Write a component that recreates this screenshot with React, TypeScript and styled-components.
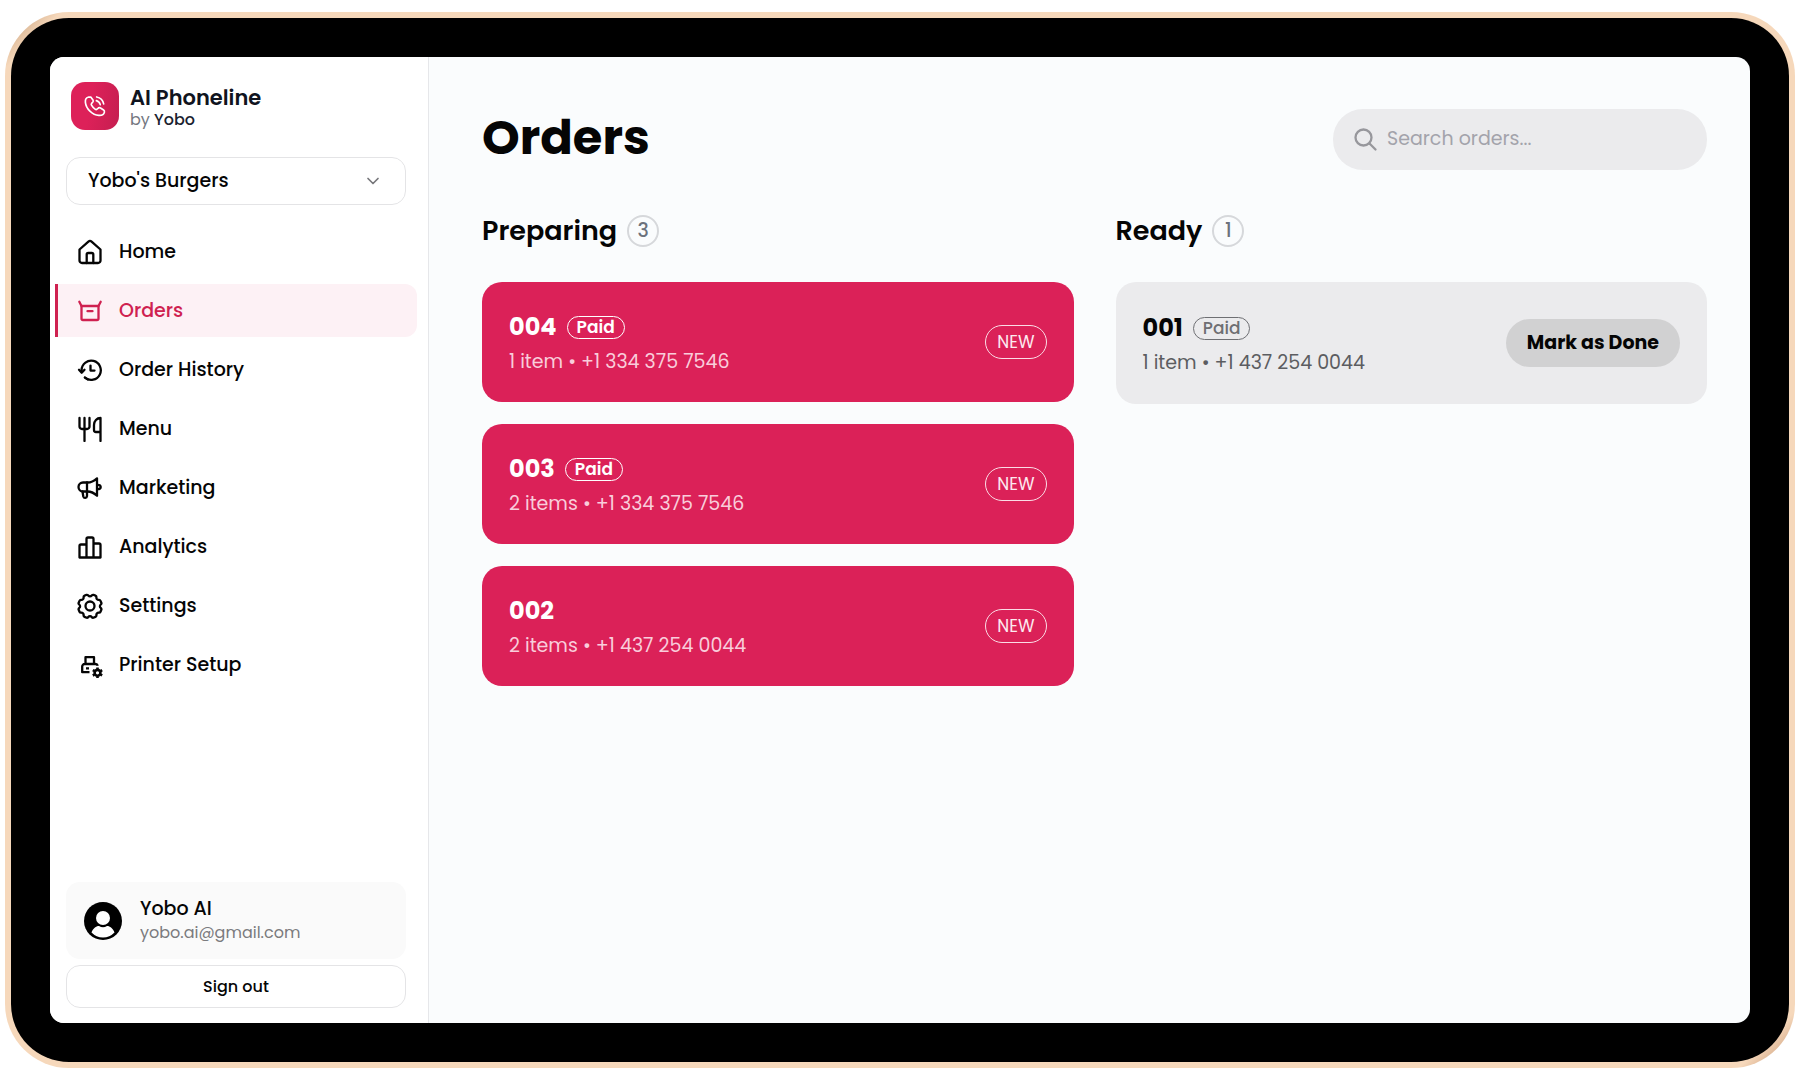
import React from "react";
import styled, { createGlobalStyle, css } from "styled-components";

const crimson = "#db2158";

const GlobalStyle = createGlobalStyle`
  *, *::before, *::after { box-sizing: border-box; }
  body {
    margin: 0;
    background: #fff;
    color: #050505;
    font-family: Poppins, Inter, "Noto Sans", sans-serif;
    font-size: 19px;
    line-height: 24px;
  }
  button, input, select { font: inherit; color: inherit; }
  h1, h2, h3, p, ul { margin: 0; padding: 0; }
  ul { list-style: none; }
`;

/* ---------- tablet ---------- */

const Stage = styled.div`
  display: flex;
  min-height: 100vh;
  padding: 12px 5px;
`;

const Rim = styled.div`
  display: flex;
  flex: 1;
  padding: 6px;
  border-radius: 64px;
  background: linear-gradient(135deg, #b98f68 0, #f6d8bb 40px, #f6d8bb calc(100% - 40px), #b98560 100%);
`;

const Bezel = styled.div`
  display: flex;
  flex: 1;
  min-width: 0;
  padding: 39px;
  border-radius: 58px;
  background: #000;
`;

const Screen = styled.div`
  display: flex;
  flex: 1;
  min-width: 0;
  overflow: hidden;
  border-radius: 14px;
  background: #fafcfd;
`;

/* ---------- sidebar ---------- */

const Sidebar = styled.aside`
  display: flex;
  flex-direction: column;
  flex: 0 0 379px;
  padding: 25px 0 15px;
  border-right: 1px solid #e6e7ea;
  background: #fff;
`;

const Brand = styled.div`
  display: flex;
  align-items: center;
  gap: 11px;
  padding: 0 21px;
`;

const BrandMark = styled.div`
  display: grid;
  place-items: center;
  width: 48px;
  height: 48px;
  border-radius: 14px;
  background: linear-gradient(100deg, #dd2159 40%, #c51e50);
  color: #fff;
`;

const BrandText = styled.div`
  padding-top: 4px;
`;

const BrandName = styled.p`
  font-size: 21px;
  font-weight: 600;
  line-height: 24px;
  color: #101420;
`;

const BrandBy = styled.p`
  font-size: 16px;
  line-height: 20px;
  color: #74777f;

  strong {
    font-weight: 500;
    color: #1b2230;
  }
`;

const StorePicker = styled.label`
  position: relative;
  display: block;
  margin: 27px 22px 20px 16px;

  svg {
    position: absolute;
    right: 25px;
    top: 16px;
    pointer-events: none;
  }
`;

const StoreSelect = styled.select`
  appearance: none;
  display: block;
  width: 100%;
  height: 48px;
  padding: 0 48px 0 21px;
  border: 1px solid #e4e4e6;
  border-radius: 14px;
  background: #fff;
  font-weight: 500;
`;

const NavList = styled.ul`
  display: flex;
  flex-direction: column;
  gap: 6px;
  padding: 0 11px 0 5px;
`;

const NavLink = styled.a<{ $active?: boolean }>`
  display: flex;
  align-items: center;
  gap: 16px;
  height: 53px;
  padding-left: 19px;
  border-left: 3px solid transparent;
  border-radius: 0 12px 12px 0;
  font-weight: 500;
  color: #050505;
  text-decoration: none;

  ${(p) =>
    p.$active &&
    css`
      border-left-color: #cf2150;
      background: #fdf1f5;
      color: #cf2150;
    `}
`;

const Account = styled.div`
  display: flex;
  flex-direction: column;
  gap: 6px;
  margin: auto 22px 0 16px;
`;

const UserCard = styled.div`
  display: flex;
  align-items: center;
  gap: 18px;
  height: 77px;
  padding: 0 18px;
  border-radius: 14px;
  background: #fafafa;
`;

const UserName = styled.p`
  font-weight: 500;
`;

const UserMail = styled.p`
  font-size: 16px;
  color: #7b7b7e;
`;

const SignOut = styled.button`
  height: 43px;
  border: 1px solid #e4e4e6;
  border-radius: 14px;
  background: #fff;
  font-size: 16px;
  font-weight: 500;
  cursor: pointer;
`;

/* ---------- main ---------- */

const Main = styled.main`
  flex: 1;
  min-width: 0;
  padding: 52px 43px 52px 53px;
`;

const Header = styled.header`
  display: flex;
  align-items: flex-start;
  justify-content: space-between;
`;

const Title = styled.h1`
  font-size: 48px;
  font-weight: 700;
  line-height: 58px;
`;

const SearchBox = styled.label`
  display: flex;
  align-items: center;
  gap: 8px;
  width: 374px;
  height: 61px;
  padding: 0 20px 2px;
  border-radius: 30px;
  background: #ebebed;
  color: #97979c;
`;

const SearchInput = styled.input`
  flex: 1;
  min-width: 0;
  padding: 0;
  border: 0;
  outline: 0;
  background: none;
  color: #050505;

  &::placeholder {
    color: #a3a3ab;
    opacity: 1;
  }
`;

const Board = styled.div`
  display: grid;
  grid-template-columns: 1fr 1fr;
  gap: 42px;
  margin-top: 45px;
`;

const ColumnHead = styled.div`
  display: flex;
  align-items: center;
  gap: 10px;
  margin-bottom: 35px;
`;

const ColumnTitle = styled.h2`
  font-size: 27px;
  font-weight: 600;
  line-height: 32px;
`;

const Count = styled.span`
  display: grid;
  place-items: center;
  width: 32px;
  height: 32px;
  border: 2px solid #d6d8db;
  border-radius: 50%;
  font-weight: 500;
  color: #6c727c;
`;

const CardList = styled.ul`
  display: flex;
  flex-direction: column;
  gap: 22px;
`;

const Card = styled.li<{ $ready?: boolean }>`
  display: flex;
  align-items: center;
  justify-content: space-between;
  min-height: ${(p) => (p.$ready ? 122 : 120)}px;
  padding: 25px 27px;
  border-radius: 20px;
  background: ${(p) => (p.$ready ? "#ebebed" : crimson)};
  color: ${(p) => (p.$ready ? "#050505" : "#fff")};
`;

const OrderInfo = styled.div`
  padding-top: 5px;
`;

const OrderLine = styled.div`
  display: flex;
  align-items: center;
  gap: 10px;
`;

const OrderNumber = styled.h3`
  font-size: 24px;
  font-weight: 700;
  line-height: 30px;
`;

const Paid = styled.span<{ $ready?: boolean }>`
  padding: 0 9px;
  border: 1px solid ${(p) => (p.$ready ? "#6e6f73" : "#fff")};
  border-radius: 12px;
  font-size: 17px;
  font-weight: ${(p) => (p.$ready ? 500 : 600)};
  line-height: 21px;
  color: ${(p) => (p.$ready ? "#6e6f73" : "#fff")};
`;

const OrderMeta = styled.p<{ $ready?: boolean }>`
  margin-top: 5px;
  line-height: 30px;
  color: ${(p) => (p.$ready ? "#5c5d61" : "#f9cddb")};
`;

const NewTag = styled.span`
  padding: 0 11px;
  border: 1px solid #fbdde6;
  border-radius: 17px;
  font-size: 17px;
  line-height: 32px;
  color: #fdeaf0;
`;

const DoneButton = styled.button`
  height: 48px;
  padding: 0 21px;
  border: 0;
  border-radius: 24px;
  background: #d1d1d2;
  font-weight: 700;
  cursor: pointer;
`;

/* ---------- icons ---------- */

const Icon = ({ children, size = 26, width = 2.3 }: { children: React.ReactNode; size?: number; width?: number }) => (
  <svg
    width={size}
    height={size}
    viewBox="0 0 26 26"
    fill="none"
    stroke="currentColor"
    strokeWidth={width}
    strokeLinecap="round"
    strokeLinejoin="round"
    aria-hidden="true"
  >
    {children}
  </svg>
);

const HomeIcon = () => (
  <Icon>
    <path d="M2.5 10.5 11.4 2.6a2.4 2.4 0 0 1 3.2 0l8.9 7.9v11a2.5 2.5 0 0 1-2.5 2.5H5a2.5 2.5 0 0 1-2.5-2.5z" />
    <path d="M9.7 24v-8.5a1.5 1.5 0 0 1 1.5-1.500h3.6a1.5 1.5 0 0 1 1.5 1.500V24" />
  </Icon>
);

const OrdersIcon = () => (
  <Icon>
    <path d="M4.5 8v12.5A1.5 1.5 0 0 0 6 22h14a1.5 1.5 0 0 0 1.5-1.5V8z" />
    <path d="M4.5 8 2.3 3.8M21.5 8l2.2-4.2M10.500 13.2h5" />
  </Icon>
);

const HistoryIcon = () => (
  <Icon>
    <path d="M4.6 14.5V13A9.6 9.6 0 1 1 8 20.6" />
    <path d="m2 12.8 2.7 2.9 2.8-2.9M13.5 8.6v5h4" />
    <path d="M7.9 20.5q1.6 1.4 3 1.8" />
  </Icon>
);

const MenuIcon = () => (
  <Icon>
    <path d="M2.5 2v8.5A2.5 2.5 0 0 0 5 13h5a2.5 2.5 0 0 0 2.5-2.5V2M7.5 2v23" />
    <path d="M23.5 25V2c-3.6 0-6.5 3-6.5 7v5a2 2 0 0 0 2 2h4.5" />
  </Icon>
);

const MarketingIcon = () => (
  <Icon>
    <path d="M10.5 7.5H6a4.5 4.5 0 0 0 0 9h4.5c3.5 0 6.5 1.5 9.5 4.2V3.3c-3 2.700-6 4.200-9.500 4.200z" />
    <path d="M10 7.5v9M20.500 9.800c2.200 0 3.200 1 3.200 2.200s-1 2.200-3.200 2.200M5.500 16.500l.8 5a1.9 1.9 0 0 0 3.7-.3v-4.500" />
  </Icon>
);

const AnalyticsIcon = () => (
  <Icon>
    <path d="M9.5 23.500h-7V12a1.500 1.500 0 0 1 1.500-1.500h5.500M9.500 23.500V5A1.500 1.500 0 0 1 11 3.500h4A1.500 1.500 0 0 1 16.500 5v18.500zM16.500 9.500H22a1.500 1.500 0 0 1 1.500 1.500v12.500h-7" />
  </Icon>
);

const SettingsIcon = () => (
  <Icon>
    <circle cx="13" cy="13" r="4.500" />
    <path d="M9.600 1.800a2 2 0 0 1 1.700.7 2.200 2.200 0 0 0 3.400 0 2 2 0 0 1 1.700-.7l2 .8c.8.300 1.100 1.100 1 1.900a2.200 2.200 0 0 0 2.400 2.400c.8-.1 1.400.300 1.700 1l.8 1.900c.3.700 0 1.400-.6 1.800a2.100 2.100 0 0 0 0 3.300c.6.500.9 1.200.6 1.900l-.8 1.900c-.3.700-.900 1.100-1.700 1a2.200 2.200 0 0 0-2.400 2.400c.1.800-.2 1.500-1 1.800l-2 .8a1.800 1.800 0 0 1-1.700-.7 2.200 2.200 0 0 0-3.400 0 1.800 1.800 0 0 1-1.700.7l-2-.8c-.8-.3-1.100-1-1-1.800a2.200 2.200 0 0 0-2.400-2.400c-.8.1-1.400-.300-1.700-1l-.8-1.900c-.3-.7 0-1.400.6-1.900a2.100 2.100 0 0 0 0-3.300c-.6-.4-.9-1.100-.6-1.800l.8-1.900c.3-.7.900-1.100 1.700-1a2.200 2.200 0 0 0 2.400-2.400c-.1-.8.200-1.600 1-1.900z" />
  </Icon>
);

const PrinterIcon = () => (
  <Icon>
    <path d="M8.500 12V5.200h8.500V12M12.500 20.200H5.200v-5.700A2.500 2.500 0 0 1 7.700 12h10.800a2.500 2.500 0 0 1 2.300 1.800M9 16.300h3" strokeLinecap="butt" />
    <circle cx="20.500" cy="20.800" r="2.900" strokeWidth="2.600" />
    <path
      d="M20.500 15.400v10.800M15.800 18.100l9.400 5.400M15.800 23.500l9.400-5.400"
      strokeWidth="2.600"
      strokeDasharray="1.800 7.200"
      strokeLinecap="butt"
    />
  </Icon>
);

const CallIcon = () => (
  <Icon size={24} width={1.8}>
    <path d="M8.600 3.400 6.300 3.200C3.700 3.600 2.300 6 2.600 9c.7 7 7.500 13.700 14.500 14.200 3 .2 5.600-1.200 6.100-3.600.2-1-.1-1.800-.9-2.300l-3.300-2.100c-1-.6-2-.5-2.800.3l-1.100 1c-.6.500-1.300.4-2-.1-1.700-1.200-2.900-2.500-3.900-4.300-.4-.7-.4-1.300.1-1.900l1.200-1.300c.7-.8.8-1.600.3-2.500z" />
    <path d="M14.500 7.200a6 6 0 0 1 4.200 4.300M14.800 3.200a9.500 9.500 0 0 1 7.600 7.500" />
  </Icon>
);

const ChevronIcon = () => (
  <svg width="16" height="16" viewBox="0 0 16 16" fill="none" stroke="#77777b" strokeWidth="1.700" strokeLinecap="round" strokeLinejoin="round" aria-hidden="true">
    <path d="m3 5.500 5 5 5-5" />
  </svg>
);

const SearchIcon = () => (
  <Icon>
    <circle cx="10.500" cy="11.500" r="8" />
    <path d="m16.500 17.500 6 6" />
  </Icon>
);

const Avatar = () => (
  <svg width="38" height="38" viewBox="0 0 38 38" aria-hidden="true">
    <circle cx="19" cy="19" r="19" fill="#000" />
    <circle cx="19" cy="16" r="7" fill="#fff" />
    <path d="M7.500 30.500C9 26.500 12 24 15 24q4 2.500 8 0c3 0 6 2.500 7.500 6.500A16.500 16.500 0 0 1 19 35.500a16.500 16.500 0 0 1-11.500-5z" fill="#fff" />
  </svg>
);

/* ---------- data ---------- */

const nav = [
  { label: "Home", icon: HomeIcon },
  { label: "Orders", icon: OrdersIcon, active: true },
  { label: "Order History", icon: HistoryIcon },
  { label: "Menu", icon: MenuIcon },
  { label: "Marketing", icon: MarketingIcon },
  { label: "Analytics", icon: AnalyticsIcon },
  { label: "Settings", icon: SettingsIcon },
  { label: "Printer Setup", icon: PrinterIcon },
];

type Order = { id: string; items: string; phone: string; paid: boolean };

const preparing: Order[] = [
  { id: "004", items: "1 item", phone: "+1 334 375 7546", paid: true },
  { id: "003", items: "2 items", phone: "+1 334 375 7546", paid: true },
  { id: "002", items: "2 items", phone: "+1 437 254 0044", paid: false },
];

const ready: Order[] = [{ id: "001", items: "1 item", phone: "+1 437 254 0044", paid: true }];

const OrderCard = ({ order, isReady }: { order: Order; isReady?: boolean }) => (
  <Card $ready={isReady}>
    <OrderInfo>
      <OrderLine>
        <OrderNumber>{order.id}</OrderNumber>
        {order.paid && <Paid $ready={isReady}>Paid</Paid>}
      </OrderLine>
      <OrderMeta $ready={isReady}>
        {order.items} • {order.phone}
      </OrderMeta>
    </OrderInfo>
    {isReady ? <DoneButton type="button">Mark as Done</DoneButton> : <NewTag>NEW</NewTag>}
  </Card>
);

const OrderColumn = ({ title, orders, isReady }: { title: string; orders: Order[]; isReady?: boolean }) => (
  <section>
    <ColumnHead>
      <ColumnTitle>{title}</ColumnTitle>
      <Count>{orders.length}</Count>
    </ColumnHead>
    <CardList>
      {orders.map((order) => (
        <OrderCard key={order.id} order={order} isReady={isReady} />
      ))}
    </CardList>
  </section>
);

export default function App() {
  return (
    <>
      <GlobalStyle />
      <Stage>
        <Rim>
          <Bezel>
            <Screen>
              <Sidebar>
                <Brand>
                  <BrandMark>
                    <CallIcon />
                  </BrandMark>
                  <BrandText>
                    <BrandName>AI Phoneline</BrandName>
                    <BrandBy>
                      by <strong>Yobo</strong>
                    </BrandBy>
                  </BrandText>
                </Brand>
                <StorePicker>
                  <StoreSelect aria-label="Store">
                    <option>Yobo's Burgers</option>
                  </StoreSelect>
                  <ChevronIcon />
                </StorePicker>
                <nav>
                  <NavList>
                    {nav.map(({ label, icon: NavIcon, active }) => (
                      <li key={label}>
                        <NavLink href="#" $active={active} aria-current={active ? "page" : undefined}>
                          <NavIcon />
                          {label}
                        </NavLink>
                      </li>
                    ))}
                  </NavList>
                </nav>
                <Account>
                  <UserCard>
                    <Avatar />
                    <div>
                      <UserName>Yobo AI</UserName>
                      <UserMail>yobo.ai@gmail.com</UserMail>
                    </div>
                  </UserCard>
                  <SignOut type="button">Sign out</SignOut>
                </Account>
              </Sidebar>
              <Main>
                <Header>
                  <Title>Orders</Title>
                  <SearchBox>
                    <SearchIcon />
                    <SearchInput type="search" placeholder="Search orders..." aria-label="Search orders" />
                  </SearchBox>
                </Header>
                <Board>
                  <OrderColumn title="Preparing" orders={preparing} />
                  <OrderColumn title="Ready" orders={ready} isReady />
                </Board>
              </Main>
            </Screen>
          </Bezel>
        </Rim>
      </Stage>
    </>
  );
}
